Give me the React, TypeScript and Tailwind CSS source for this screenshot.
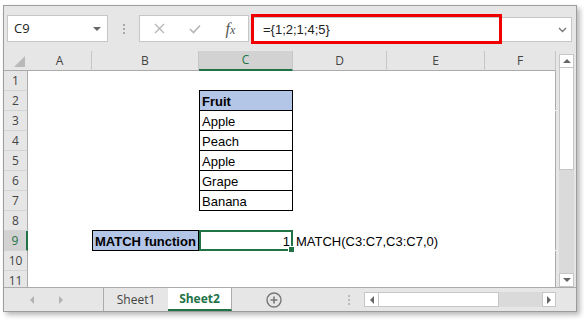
import React from "react";

const COLS = ["A", "B", "C", "D", "E", "F"];
const ROWS = [1, 2, 3, 4, 5, 6, 7, 8, 9, 10, 11];
const FRUITS: Record<number, string> = {
    2: "Fruit",
    3: "Apple",
    4: "Peach",
    5: "Apple",
    6: "Grape",
    7: "Banana",
};

function Tri({ dir }: { dir: "up" | "down" | "left" | "right" }) {
    const pts = {
        up: "0,5 4,1 8,5",
        down: "0,1 8,1 4,5",
        left: "5,0 5,8 1,4",
        right: "1,0 1,8 5,4",
    }[dir];
    const vert = dir === "up" || dir === "down";
    return (
        <svg width={vert ? 8 : 6} height={vert ? 6 : 8} viewBox={vert ? "0 0 8 6" : "0 0 6 8"}>
            <polygon points={pts} fill="#666" />
        </svg>
    );
}

function RowHeader({ r }: { r: number }) {
    if (r === 9) {
        return (
            <div className="flex h-[20px] items-center justify-center border-b border-b-[#d4d4d4] border-r-2 border-r-[#217346] bg-[#d2d2d2] text-[#217346]">
                {r}
            </div>
        );
    }
    return (
        <div className="flex h-[20px] items-center justify-center border-b border-b-[#d4d4d4] border-r border-r-[#ababab] text-[#444]">
            {r}
        </div>
    );
}

function BodyCell({ r, c }: { r: number; c: string }) {
    if (c === "C" && FRUITS[r]) {
        if (r === 2) {
            return (
                <div className="flex h-[21px] items-center border border-black bg-[#b4c6e7] pl-[2px] pt-[1px] font-bold">
                    {FRUITS[r]}
                </div>
            );
        }
        return (
            <div className="flex h-[20px] items-center border-x border-b border-black pl-[2px] pt-[1px]">
                {FRUITS[r]}
            </div>
        );
    }
    if (r === 9 && c === "B") {
        return (
            <div className="flex h-[21px] items-center whitespace-nowrap border border-black bg-[#b4c6e7] pl-[2px] pt-[1px] font-bold">
                MATCH function
            </div>
        );
    }
    if (r === 9 && c === "C") {
        return (
            <div className="relative flex h-[21px] items-center justify-end border-2 border-[#217346] pr-[1px] pt-[1px]">
                1
                <div className="absolute -bottom-[4px] -right-[4px] z-20 h-[7px] w-[7px] border border-white bg-[#217346]" />
            </div>
        );
    }
    if (r === 9 && c === "D") {
        return (
            <div className="relative z-10 flex h-[21px] items-center whitespace-nowrap pl-[3px] pt-[1px]">
                MATCH(C3:C7,C3:C7,0)
            </div>
        );
    }
    if (c === "F") {
        return <div className="h-[20px] border-r border-[#ababab]" />;
    }
    return <div className="h-[20px]" />;
}

export default function App() {
    return (
        <div className="h-[322px] w-[584px] bg-white pl-[3px] pt-[5px] font-['Open_Sans',sans-serif]">
            <div className="flex h-[307px] w-[574px] flex-col border border-[#9c9c9c] bg-[#e6e6e6] shadow-[3px_3px_5px_rgba(0,0,0,0.28)]">
                {/* formula bar */}
                <div className="flex h-[45px] shrink-0 items-start pl-[3px] pt-[9px]">
                    <div className="flex h-[27px] w-[101px] items-center justify-between border border-[#c6c6c6] bg-white pl-[6px] pr-[6px] text-[13px] text-[#222]">
                        <span>C9</span>
                        <Tri dir="down" />
                    </div>
                    <div className="flex h-[27px] w-[31px] flex-col items-center justify-center gap-[2px]">
                        <div className="h-[2px] w-[2px] bg-[#aaa]" />
                        <div className="h-[2px] w-[2px] bg-[#aaa]" />
                        <div className="h-[2px] w-[2px] bg-[#aaa]" />
                    </div>
                    <div className="flex h-[27px] w-[110px] items-center border border-[#c6c6c6] bg-white pl-[2px]">
                        <div className="flex w-[36px] justify-center">
                            <svg width="11" height="11" viewBox="0 0 11 11">
                                <path d="M1 1L10 10M10 1L1 10" stroke="#b5b5b5" strokeWidth="1.3" />
                            </svg>
                        </div>
                        <div className="flex w-[36px] justify-center">
                            <svg width="12" height="10" viewBox="0 0 12 10">
                                <path d="M1 5L4.5 8.5L11 1.5" stroke="#b5b5b5" strokeWidth="1.6" fill="none" />
                            </svg>
                        </div>
                        <div className="flex w-[36px] items-baseline justify-center font-['Liberation_Serif',serif] text-[16px] italic leading-none text-[#555]">
                            <span>f</span>
                            <span className="text-[12px]">x</span>
                        </div>
                    </div>
                    <div className="relative ml-[2px] mt-[2px] flex h-[25px] w-[321px] items-center justify-between border border-[#c6c6c6] bg-white pl-[11px] pr-[4px] font-['Liberation_Sans',sans-serif] text-[13px] text-[#222]">
                        <span>={"{"}1;2;1;4;5{"}"}</span>
                        <svg width="9" height="6" viewBox="0 0 9 6">
                            <path d="M1 1L4.5 4.5L8 1" stroke="#777" strokeWidth="1.4" fill="none" />
                        </svg>
                        <div className="absolute -left-[1px] -top-[4px] h-[30px] w-[251px] border-[3px] border-[#f00000]" />
                    </div>
                </div>

                {/* grid + vertical scrollbar */}
                <div className="flex h-[236px] shrink-0">
                    <div className="flex w-[552px] flex-col overflow-hidden">
                        <div className="grid h-[20px] shrink-0 grid-cols-[24px_64px_107px_94px_94px_98px_71px] text-[12px]">
                            <div className="flex items-end justify-end border-b border-[#ababab] pb-[3px] pr-[3px]">
                                <svg width="11" height="11" viewBox="0 0 11 11">
                                    <polygon points="11,0 11,11 0,11" fill="#b9b9b9" />
                                </svg>
                            </div>
                            {COLS.map((c) =>
                                c === "C" ? (
                                    <div
                                        key={c}
                                        className="flex items-center justify-center border-b-2 border-r border-b-[#217346] border-r-[#c6c6c6] bg-[#d2d2d2] text-[#217346]"
                                    >
                                        {c}
                                    </div>
                                ) : (
                                    <div
                                        key={c}
                                        className="flex items-center justify-center border-b border-r border-b-[#ababab] border-r-[#c6c6c6] text-[#444]"
                                    >
                                        {c}
                                    </div>
                                )
                            )}
                        </div>
                        <div className="grid grid-cols-[24px_64px_107px_94px_94px_98px_71px] auto-rows-[20px] font-['Liberation_Sans',sans-serif] text-[13px] leading-[15px] text-black">
                            {ROWS.map((r) => (
                                <React.Fragment key={r}>
                                    <div className="bg-[#e6e6e6] font-['Open_Sans',sans-serif] text-[12px]">
                                        <RowHeader r={r} />
                                    </div>
                                    {COLS.map((c) => (
                                        <div
                                            key={c}
                                            className={
                                                r === 9 || r === 2
                                                    ? "relative -mt-px bg-white"
                                                    : "bg-white"
                                            }
                                        >
                                            <BodyCell r={r} c={c} />
                                        </div>
                                    ))}
                                </React.Fragment>
                            ))}
                        </div>
                    </div>
                    <div className="ml-[3px] flex w-[15px] flex-col pt-[3px]">
                        <div className="flex h-[14px] items-center justify-center border border-[#c6c6c6] bg-white">
                            <Tri dir="up" />
                        </div>
                        <div className="h-[102px] border-x border-b border-[#c6c6c6] bg-white" />
                        <div className="flex-1 bg-[#dadada]" />
                        <div className="flex h-[14px] items-center justify-center border border-[#c6c6c6] bg-white">
                            <Tri dir="down" />
                        </div>
                    </div>
                </div>

                {/* sheet tabs */}
                <div className="flex h-[24px] shrink-0 items-stretch border-t border-[#ababab] text-[12px]">
                    <div className="flex w-[99px] items-center pl-[25px] opacity-40">
                        <Tri dir="left" />
                        <div className="ml-[23px]">
                            <Tri dir="right" />
                        </div>
                    </div>
                    <div className="flex w-[65px] items-center justify-center border-l border-[#ababab] text-[#444]">
                        Sheet1
                    </div>
                    <div className="flex w-[64px] items-center justify-center border-b-2 border-r border-b-[#217346] border-r-[#ababab] bg-white font-bold text-[#217346]">
                        Sheet2
                    </div>
                    <div className="ml-[34px] flex items-center">
                        <svg width="16" height="16" viewBox="0 0 16 16">
                            <circle cx="8" cy="8" r="7" stroke="#777" strokeWidth="1.4" fill="none" />
                            <path d="M8 4.5V11.5M4.5 8H11.5" stroke="#777" strokeWidth="1.6" />
                        </svg>
                    </div>
                    <div className="ml-[66px] flex flex-col items-center justify-center gap-[2px]">
                        <div className="h-[2px] w-[2px] bg-[#bbb]" />
                        <div className="h-[2px] w-[2px] bg-[#bbb]" />
                        <div className="h-[2px] w-[2px] bg-[#bbb]" />
                    </div>
                    <div className="ml-[14px] flex items-center">
                        <div className="flex h-[15px] w-[15px] items-center justify-center border border-[#c6c6c6] bg-white">
                            <Tri dir="left" />
                        </div>
                        <div className="h-[15px] w-[120px] border-y border-r border-[#c6c6c6] bg-white" />
                        <div className="h-[15px] w-[43px] bg-[#dadada]" />
                        <div className="flex h-[15px] w-[14px] items-center justify-center border border-[#c6c6c6] bg-white">
                            <Tri dir="right" />
                        </div>
                    </div>
                </div>
            </div>
        </div>
    );
}
